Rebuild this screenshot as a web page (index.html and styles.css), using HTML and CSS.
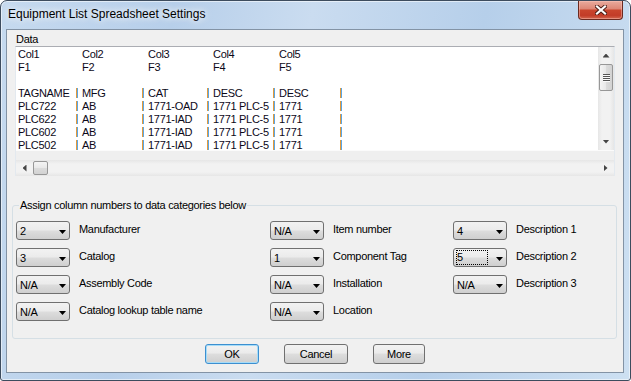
FILE: index.html
```html
<!DOCTYPE html>
<html>
<head>
<meta charset="utf-8">
<title>Equipment List Spreadsheet Settings</title>
<link rel="stylesheet" href="styles.css">
</head>
<body>
<div class="window">
  <div class="titlebar">
    <span class="title">Equipment List Spreadsheet Settings</span>
    <div class="close">
      <svg width="12" height="10" viewBox="0 0 12 10">
        <path d="M2 1.5 L10 8.5 M10 1.5 L2 8.5" stroke="#4a1c14" stroke-width="4" stroke-linecap="square" fill="none"/>
        <path d="M2 1.5 L10 8.5 M10 1.5 L2 8.5" stroke="#ffffff" stroke-width="2.2" stroke-linecap="square" fill="none"/>
      </svg>
    </div>
  </div>
  <div class="client">
    <div class="data-label">Data</div>
    <div class="data-box">
      <div class="data-main">
        <div class="data-text">
          <div class="grid">
            <div>Col1</div><div class="h">Col2</div><div class="h">Col3</div><div class="h">Col4</div><div class="h">Col5</div><div></div>
            <div>F1</div><div class="h">F2</div><div class="h">F3</div><div class="h">F4</div><div class="h">F5</div><div></div>
            <div class="blank"></div>
            <div>TAGNAME</div><div><i class="pipe"></i>MFG</div><div><i class="pipe"></i>CAT</div><div><i class="pipe"></i>DESC</div><div><i class="pipe"></i>DESC</div><div><i class="pipe"></i></div>
            <div>PLC722</div><div><i class="pipe"></i>AB</div><div><i class="pipe"></i>1771-OAD</div><div><i class="pipe"></i>1771 PLC-5</div><div><i class="pipe"></i>1771</div><div><i class="pipe"></i></div>
            <div>PLC622</div><div><i class="pipe"></i>AB</div><div><i class="pipe"></i>1771-IAD</div><div><i class="pipe"></i>1771 PLC-5</div><div><i class="pipe"></i>1771</div><div><i class="pipe"></i></div>
            <div>PLC602</div><div><i class="pipe"></i>AB</div><div><i class="pipe"></i>1771-IAD</div><div><i class="pipe"></i>1771 PLC-5</div><div><i class="pipe"></i>1771</div><div><i class="pipe"></i></div>
            <div>PLC502</div><div><i class="pipe"></i>AB</div><div><i class="pipe"></i>1771-IAD</div><div><i class="pipe"></i>1771 PLC-5</div><div><i class="pipe"></i>1771</div><div><i class="pipe"></i></div>
          </div>
        </div>
        <div class="vscroll">
          <div class="sb-btn"><span class="tri up"></span></div>
          <div class="vthumb"><span class="grip"></span></div>
          <div class="track"></div>
          <div class="sb-btn"><span class="tri down"></span></div>
        </div>
      </div>
      <div class="hgap"></div>
      <div class="hscroll">
        <div class="sb-btn h"><span class="tri left"></span></div>
        <div class="hthumb"></div>
        <div class="track"></div>
        <div class="sb-btn h"><span class="tri right"></span></div>
      </div>
    </div>

    <fieldset class="group">
      <legend>Assign column numbers to data categories below</legend>
      <div class="fields">
        <div class="field"><div class="combo"><span class="val">2</span><span class="arr"></span></div><span class="lbl">Manufacturer</span></div>
        <div class="field"><div class="combo"><span class="val">N/A</span><span class="arr"></span></div><span class="lbl">Item number</span></div>
        <div class="field"><div class="combo"><span class="val">4</span><span class="arr"></span></div><span class="lbl">Description 1</span></div>

        <div class="field"><div class="combo"><span class="val">3</span><span class="arr"></span></div><span class="lbl">Catalog</span></div>
        <div class="field"><div class="combo"><span class="val">1</span><span class="arr"></span></div><span class="lbl">Component Tag</span></div>
        <div class="field"><div class="combo"><span class="val focus">5</span><span class="arr"></span></div><span class="lbl">Description 2</span></div>

        <div class="field"><div class="combo"><span class="val">N/A</span><span class="arr"></span></div><span class="lbl">Assembly Code</span></div>
        <div class="field"><div class="combo"><span class="val">N/A</span><span class="arr"></span></div><span class="lbl">Installation</span></div>
        <div class="field"><div class="combo"><span class="val">N/A</span><span class="arr"></span></div><span class="lbl">Description 3</span></div>

        <div class="field"><div class="combo"><span class="val">N/A</span><span class="arr"></span></div><span class="lbl">Catalog lookup table name</span></div>
        <div class="field"><div class="combo"><span class="val">N/A</span><span class="arr"></span></div><span class="lbl">Location</span></div>
      </div>
    </fieldset>

    <div class="buttons">
      <div class="btn ok">OK</div>
      <div class="btn cancel">Cancel</div>
      <div class="btn more">More</div>
    </div>
  </div>
</div>
</body>
</html>
```

FILE: styles.css
```css
* { box-sizing: border-box; }
html, body { margin: 0; padding: 0; }
body {
  width: 631px;
  height: 381px;
  overflow: hidden;
  background: #ffffff;
  font-family: "Liberation Sans", Arial, sans-serif;
  font-size: 11px;
  letter-spacing: -0.3px;
  color: #000;
}

.window {
  width: 631px;
  height: 381px;
  border: 1px solid #3d4c5e;
  border-radius: 7px 7px 3px 3px;
  background: linear-gradient(100deg, #c6daef 0%, #b7cfea 25%, #cadcf0 45%, #b6cfea 70%, #cde0f2 100%);
  box-shadow: inset 0 0 0 1px rgba(255, 255, 255, 0.55);
  display: flex;
  flex-direction: column;
}

.titlebar {
  height: 28px;
  flex: none;
  display: flex;
  align-items: flex-start;
  padding-left: 7px;
}
.title {
  font-size: 12px;
  letter-spacing: 0;
  line-height: 15px;
  margin-top: 6px;
  text-shadow: 0 0 6px #ffffff, 0 0 10px rgba(255, 255, 255, 0.8);
}
.close {
  margin-left: auto;
  margin-right: 7px;
  width: 45px;
  height: 19px;
  border: 1px solid #6b2a20;
  border-top: none;
  border-radius: 0 0 4px 4px;
  background: linear-gradient(#e9ab9d 0%, #dd8877 42%, #c9452d 52%, #c23c28 80%, #d2674f 100%);
  box-shadow: inset 0 0 0 1px rgba(255, 200, 190, 0.45);
  display: flex;
  align-items: center;
  justify-content: center;
}

.client {
  flex: none;
  margin: 0 6px 0 5px;
  height: 344px;
  border: 1px solid #8393a5;
  background: #f0f0f0;
}

.data-label {
  padding: 3px 0 0 9px;
  line-height: 13px;
}

.data-box {
  margin-left: 8px;
  width: 600px;
  border: 1px solid #e3e9ef;
  border-top-color: #abadb3;
  border-bottom: none;
}
.data-main {
  display: flex;
  height: 103px;
}
.data-text {
  flex: 1;
  background: #ffffff;
  overflow: hidden;
  padding: 1px 0 0 2px;
  color: #0c0818;
}
.grid {
  display: grid;
  grid-template-columns: 58px 66px 65px 66px 67px 1fr;
  grid-auto-rows: 13px;
  line-height: 13px;
  white-space: nowrap;
}
.grid .h { padding-left: 6px; }
.grid .blank { grid-column: 1 / -1; }
.pipe {
  display: inline-block;
  width: 2px;
  height: 10px;
  margin-right: 4px;
  vertical-align: -1px;
  background: linear-gradient(90deg, #e29a3c 50%, #5aa6e6 50%);
}

.vscroll {
  width: 16px;
  display: flex;
  flex-direction: column;
  background: linear-gradient(90deg, #e6e6e6, #f2f2f2 25%, #f2f2f2 75%, #e6e6e6);
}
.sb-btn {
  height: 17px;
  flex: none;
  display: flex;
  align-items: center;
  justify-content: center;
}
.sb-btn.h { width: 17px; height: 100%; }
.track { flex: 1; }
.vthumb {
  height: 27px;
  margin: 0 1px;
  border: 1px solid #979797;
  border-radius: 2px;
  background: linear-gradient(90deg, #f4f4f4, #e8e8e8 50%, #dcdcdc 50%, #d2d2d2);
  display: flex;
  align-items: center;
  justify-content: center;
}
.grip {
  width: 7px;
  height: 8px;
  background: repeating-linear-gradient(to bottom, #555555 0 1px, #fafafa 1px 2px);
}
.tri {
  display: block;
  background: #444444;
}
.tri.up { width: 7px; height: 4px; clip-path: polygon(50% 0, 100% 100%, 0 100%); }
.tri.down { width: 7px; height: 4px; clip-path: polygon(0 0, 100% 0, 50% 100%); }
.tri.left { width: 4px; height: 7px; clip-path: polygon(100% 0, 100% 100%, 0 50%); }
.tri.right { width: 4px; height: 7px; clip-path: polygon(0 0, 100% 50%, 0 100%); }

.hgap {
  height: 10px;
  border-top: 1px solid #fbfbfb;
  background: #efefef;
}
.hscroll {
  height: 16px;
  display: flex;
  background: linear-gradient(#e6e6e6, #f2f2f2 25%, #f2f2f2 75%, #e6e6e6);
}
.hthumb {
  width: 15px;
  margin: 1px 0;
  border: 1px solid #979797;
  border-radius: 2px;
  background: linear-gradient(#f4f4f4, #e8e8e8 50%, #dcdcdc 50%, #d2d2d2);
}

.group {
  margin: 23px 0 0 5px;
  width: 605px;
  height: 140px;
  min-width: 0;
  padding: 0;
  border: 1px solid #d5dfe5;
  border-radius: 3px;
}
.group legend {
  margin-left: 6px;
  padding: 0 1px;
  line-height: 13px;
}
.fields {
  display: grid;
  grid-template-columns: 254px 183px 1fr;
  grid-auto-rows: 19px;
  row-gap: 8px;
  padding: 9px 0 0 3px;
}
.field {
  display: flex;
  align-items: flex-start;
}
.combo {
  width: 54px;
  height: 19px;
  flex: none;
  border: 1px solid #707070;
  border-radius: 3px;
  background: linear-gradient(#f2f2f2, #ebebeb 48%, #dddddd 52%, #cfcfcf);
  display: flex;
  align-items: center;
}
.combo .val {
  flex: 1;
  padding-left: 3px;
  padding-top: 1px;
  line-height: 13px;
}
.combo .val.focus {
  flex: none;
  width: 32px;
  height: 15px;
  margin-left: 2px;
  padding-left: 0;
  padding-top: 0;
  border: 1px dotted #000000;
}
.combo .arr {
  width: 7px;
  height: 4px;
  margin: 3px 3px 0 auto;
  background: #000000;
  clip-path: polygon(0 0, 100% 0, 50% 100%);
}
.lbl {
  margin-left: 9px;
  padding-top: 2px;
  line-height: 13px;
  white-space: nowrap;
}

.buttons {
  display: flex;
  justify-content: center;
  gap: 25px;
  margin-top: 5px;
}
.btn {
  height: 20px;
  border: 1px solid #707070;
  border-radius: 3px;
  background: linear-gradient(#f2f2f2, #ebebeb 45%, #dddddd 50%, #cfcfcf);
  text-align: center;
  line-height: 18px;
}
.btn.ok {
  width: 54px;
  border-color: #3c8fd0;
  box-shadow: inset 0 0 0 1px #a6dcf8;
}
.btn.cancel { width: 64px; }
.btn.more { width: 52px; }
```
